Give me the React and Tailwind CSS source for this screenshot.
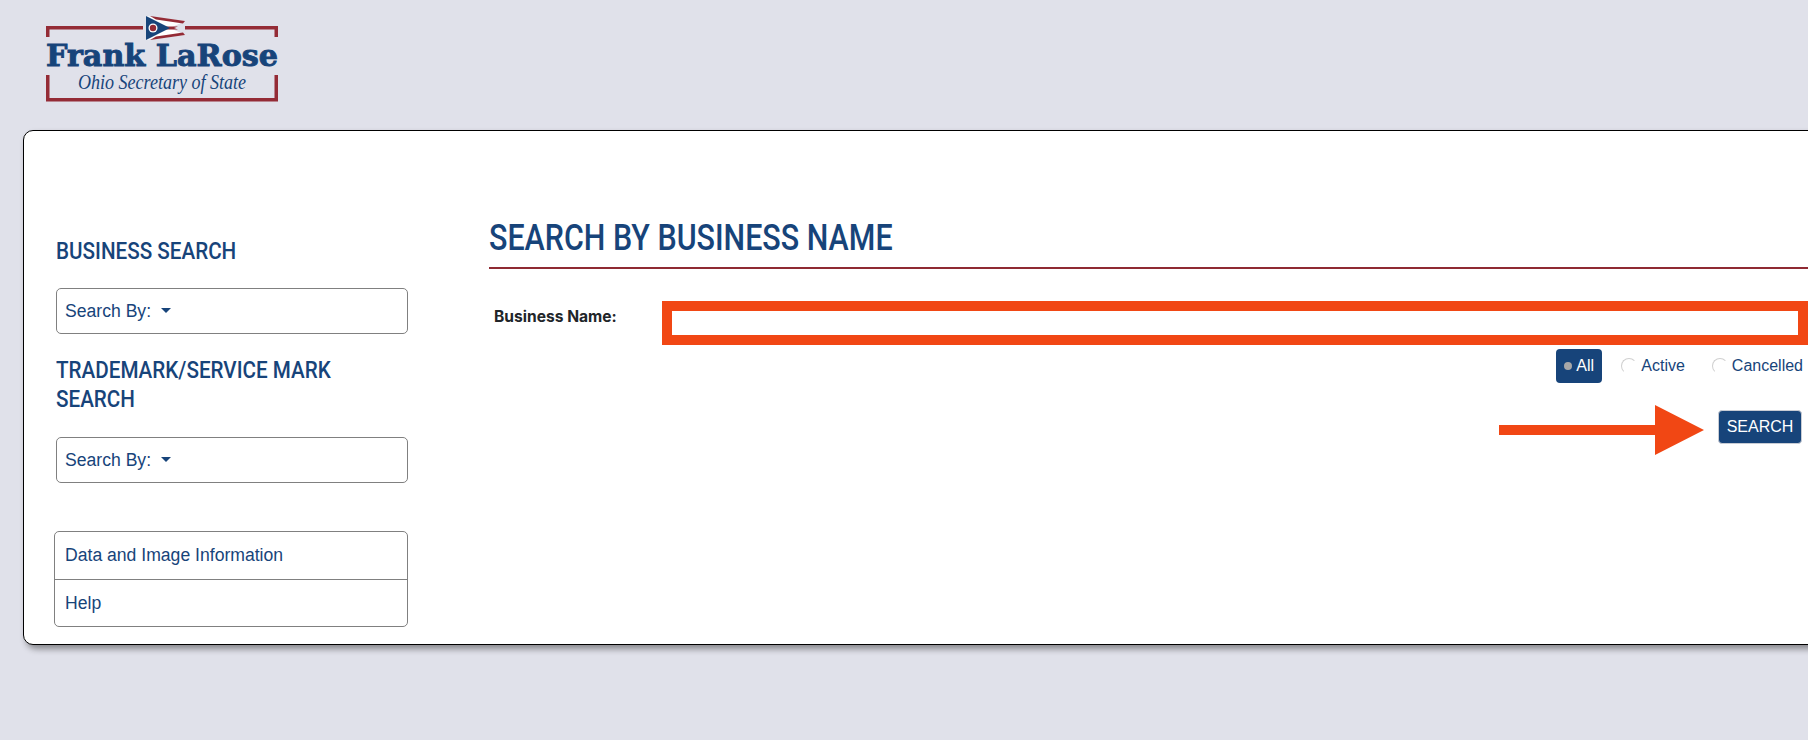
import React from "react";

const navy = "text-[#17447a]";
const sans = "font-['Liberation_Sans',Arial,sans-serif]";
const cond = "font-['Roboto',sans-serif]";

function Logo() {
  return (
    <svg width="300" height="130" viewBox="0 0 300 130" className="block">
      <g fill="none" stroke="#942b36" strokeWidth="3.5">
        <path d="M47.75 37V27.75H143" />
        <path d="M185 27.75H276.25V37" />
        <path d="M47.75 75V99.75H276.25V75" />
      </g>
      <path d="M146 16L185 21L170 28L185 35L146 40Z" fill="#ffffff" />
      <path d="M150 16L185 21L183 23.5L156 19.5Z" fill="#942b36" />
      <path d="M150 40L185 35L183 32.5L156 36.5Z" fill="#942b36" />
      <path d="M165 26.5H178L174 28L178 29.5H165Z" fill="#942b36" />
      <path d="M146 16L170 28L146 40Z" fill="#17447a" />
      <circle cx="153" cy="28" r="4.5" fill="#ffffff" />
      <circle cx="153" cy="28" r="3.2" fill="#942b36" />
      <text x="46" y="66" fill="#17447a" stroke="#17447a" strokeWidth="0.9" fontFamily="'DejaVu Serif',serif" fontWeight="700" fontSize="29" textLength="232" lengthAdjust="spacingAndGlyphs">Frank LaRose</text>
      <text x="78" y="89" fill="#17447a" fontFamily="'Liberation Serif',serif" fontStyle="italic" fontSize="20" textLength="168" lengthAdjust="spacingAndGlyphs">Ohio Secretary of State</text>
    </svg>
  );
}

function Dropdown() {
  return (
    <div className={`flex items-center h-[46px] w-[352px] border border-[#808080] rounded-[5px] pl-2 text-[17.6px] ${navy} ${sans}`}>
      <span>Search By:</span>
      <span className="ml-[10px] mb-[2px] w-0 h-0 border-x-[5px] border-x-transparent border-t-[5px] border-t-[#17447a]" />
    </div>
  );
}

function Heading({ children, className = "" }) {
  return (
    <h2 className={`w-[405px] origin-left scale-x-[0.86] text-[24px] leading-[29px] font-medium ${navy} ${cond} ${className}`}>{children}</h2>
  );
}

function Radio({ label, className = "" }) {
  return (
    <div className={`flex items-center gap-[4px] ${className}`}>
      <span className="w-4 h-4 rounded-full border border-transparent border-t-[#d0d0d0] border-l-[#d0d0d0]" />
      <span className={`text-[16px] ${navy} ${sans}`}>{label}</span>
    </div>
  );
}

export default function App() {
  return (
    <div className="w-[1808px] h-[740px] overflow-hidden bg-[#e0e1ea]">
      <header className="h-[130px]">
        <Logo />
      </header>
      <div className="ml-[23px] w-[1800px] flex bg-white border border-black rounded-[10px] shadow-[3px_4px_6px_rgba(0,0,0,0.4)]">
        <aside className="w-[465px] shrink-0 pt-[106px] pb-[17px] pl-[32px]">
          <Heading className="mb-[22px]">BUSINESS SEARCH</Heading>
          <Dropdown />
          <Heading className="mt-[22px] mb-[23px]">TRADEMARK/SERVICE MARK<br />SEARCH</Heading>
          <Dropdown />
          <div className={`mt-[48px] -ml-[2px] w-[354px] border border-[#808080] rounded-[5px] text-[17.6px] ${navy} ${sans}`}>
            <div className="h-[48px] flex items-center pl-[10px] border-b border-[#808080]">Data and Image Information</div>
            <div className="h-[46px] flex items-center pl-[10px]">Help</div>
          </div>
        </aside>
        <main className="flex-1 min-w-0 pt-[86px] pr-[14px]">
          <div className="h-[52px] -mr-[14px] border-b-2 border-[#8f2a33]">
            <h1 className={`origin-left scale-x-[0.845] text-[36px] leading-[42px] font-medium whitespace-nowrap ${navy} ${cond}`}>SEARCH BY BUSINESS NAME</h1>
          </div>
          <div className="mt-[32px] flex items-start">
            <label className="w-[173px] shrink-0 pl-[5px] pt-[4px] text-[15.6px] font-bold text-[#212529] font-['Inter',sans-serif]">Business Name:</label>
            <input className="flex-1 min-w-0 h-[44px] border-[10px] border-[#f14714] bg-white" />
          </div>
          <div className="mt-[4px] flex justify-end items-center pr-[5px]">
            <div className={`flex items-center gap-[4px] w-[46px] h-[34px] pl-[8px] bg-[#17447a] rounded-[4px] text-white text-[16px] ${sans}`}>
              <span className="w-[8px] h-[8px] rounded-full bg-[#a8a8a8]" />
              All
            </div>
            <Radio label="Active" className="ml-[19px]" />
            <Radio label="Cancelled" className="ml-[27px]" />
          </div>
          <div className="relative mt-[27px] mb-[60px] flex justify-end pr-[6px]">
            <button className={`w-[84px] h-[34px] bg-[#17447a] rounded-[4px] border border-[#c8ccd4] text-white text-[16px] ${sans}`}>SEARCH</button>
            <svg width="205" height="50" viewBox="0 0 205 50" className="absolute top-[-5px]" style={{ left: 1499 - 489 }}>
              <path d="M0 20H156V0L205 25L156 50V30H0Z" fill="#f14714" />
            </svg>
          </div>
        </main>
      </div>
    </div>
  );
}
